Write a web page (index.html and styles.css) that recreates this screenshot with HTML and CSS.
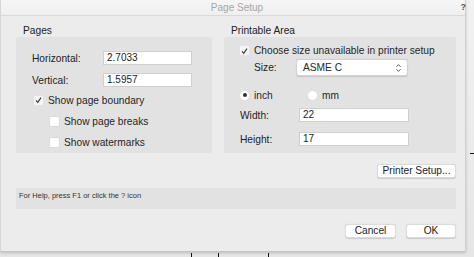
FILE: index.html
```html
<!DOCTYPE html>
<html>
<head>
<meta charset="utf-8">
<link rel="stylesheet" href="styles.css">
</head>
<body>
<div class="backdrop">
  <span class="tick tick-h"></span>
  <span class="tick tick-v t1"></span>
  <span class="tick tick-v t2"></span>
  <span class="tick tick-v t3"></span>
</div>
<div class="window">
  <div class="titlebar">
    <span class="title">Page Setup</span>
    <span class="help-icon">?</span>
  </div>
  <div class="content">
    <div class="groups">
      <div class="group pages">
        <div class="group-label">Pages</div>
        <div class="group-box">
          <div class="row field">
            <span class="lbl lbl-pages">Horizontal:</span>
            <span class="input in-pages">2.7033</span>
          </div>
          <div class="row field">
            <span class="lbl lbl-pages">Vertical:</span>
            <span class="input in-pages">1.5957</span>
          </div>
          <div class="row check first">
            <span class="cb checked"><svg viewBox="0 0 10 10" width="10" height="10"><path d="M2.2 5.4 L4.2 7.6 L7.8 2.4" fill="none" stroke="#333" stroke-width="1.2"/></svg></span>
            <span class="cb-text">Show page boundary</span>
          </div>
          <div class="row check indent">
            <span class="cb"></span>
            <span class="cb-text">Show page breaks</span>
          </div>
          <div class="row check indent">
            <span class="cb"></span>
            <span class="cb-text">Show watermarks</span>
          </div>
        </div>
      </div>
      <div class="group printable">
        <div class="group-label">Printable Area</div>
        <div class="group-box">
          <div class="row check top">
            <span class="cb checked"><svg viewBox="0 0 10 10" width="10" height="10"><path d="M2.2 5.4 L4.2 7.6 L7.8 2.4" fill="none" stroke="#333" stroke-width="1.2"/></svg></span>
            <span class="cb-text">Choose size unavailable in printer setup</span>
          </div>
          <div class="row size">
            <span class="lbl lbl-size">Size:</span>
            <span class="select">ASME C
              <svg class="updown" viewBox="0 0 8 12" width="7" height="10"><path d="M1.5 4.5 L4 2 L6.5 4.5 M1.5 7.5 L4 10 L6.5 7.5" fill="none" stroke="#444" stroke-width="1.1"/></svg>
            </span>
          </div>
          <div class="row radios">
            <span class="radio-item r-inch"><span class="radio on"></span><span class="rtext">inch</span></span>
            <span class="radio-item"><span class="radio"></span><span class="rtext">mm</span></span>
          </div>
          <div class="row dim">
            <span class="lbl lbl-dim">Width:</span>
            <span class="input in-dim">22</span>
          </div>
          <div class="row dim">
            <span class="lbl lbl-dim">Height:</span>
            <span class="input in-dim">17</span>
          </div>
        </div>
      </div>
    </div>
    <div class="printer-row">
      <span class="btn btn-printer">Printer Setup...</span>
    </div>
    <div class="helpbar">For Help, press F1 or click the ? icon</div>
    <div class="actions">
      <span class="btn btn-cancel">Cancel</span>
      <span class="btn btn-ok">OK</span>
    </div>
  </div>
</div>
</body>
</html>
```

FILE: styles.css
```css
html, body {
  margin: 0;
  padding: 0;
}
body {
  width: 474px;
  height: 257px;
  overflow: hidden;
  background: #e9e9e9;
  font-family: "Liberation Sans", Arial, sans-serif;
  font-size: 10.2px;
  color: #262626;
  position: relative;
}
.backdrop {
  position: absolute;
  left: 0;
  top: 0;
  width: 474px;
  height: 257px;
  background: linear-gradient(#f2f2f2, #e6e6e6);
}
.tick {
  position: absolute;
  background: #111;
}
.tick-h { left: 470px; top: 153px; width: 4px; height: 1px; }
.tick-v { top: 253px; width: 1px; height: 4px; }
.t1 { left: 191px; }
.t2 { left: 218px; }
.t3 { left: 268px; }
.window {
  position: relative;
  width: 466px;
  height: 252px;
  background: #ececec;
  box-sizing: border-box;
  border-left: 1px solid #d6d6d6;
  border-right: 1px solid #d0d0d0;
  border-bottom: 1px solid #c4c4c4;
  box-shadow: 0 1px 3px rgba(0,0,0,0.18);
}
.titlebar {
  height: 16px;
  box-sizing: border-box;
  border-bottom: 1px solid #d9d9d9;
  background: linear-gradient(#f6f6f6, #efefef);
  display: flex;
  justify-content: center;
  align-items: center;
  position: relative;
}
.title {
  color: #a6a6a6;
  font-size: 10px;
  line-height: 12px;
  margin-left: 8px;
}
.help-icon {
  position: absolute;
  right: -1px;
  top: 2px;
  font-size: 9px;
  font-weight: bold;
  color: #555;
  line-height: 10px;
}
.content {
  padding-left: 15px;
}
.groups {
  display: flex;
  gap: 12px;
}
.group-label {
  height: 21px;
  line-height: 12px;
  padding-top: 9px;
  box-sizing: border-box;
  padding-left: 7px;
  color: #222;
}
.group-box {
  background: #e2e2e2;
  height: 116px;
  box-sizing: border-box;
  border-radius: 2px;
}
.pages .group-box {
  width: 196px;
  padding-top: 14px;
  padding-left: 16px;
}
.printable .group-label { padding-left: 7px; }
.printable .group-box {
  width: 232px;
  padding-top: 7px;
  padding-left: 14px;
}
.row {
  display: flex;
  align-items: center;
}
.lbl { color: #222; }
.lbl-pages { width: 71px; }
.input {
  background: #fff;
  border: 1px solid #cfcfcf;
  box-sizing: border-box;
  height: 14px;
  line-height: 12px;
  padding-left: 3px;
  font-size: 10px;
  color: #222;
}
.in-pages { width: 89px; }
.field + .field { margin-top: 8px; }
.cb {
  width: 11px;
  height: 11px;
  background: #fff;
  border-radius: 2px;
  box-sizing: border-box;
  border: 1px solid #dadada;
  display: flex;
  align-items: center;
  justify-content: center;
  flex: none;
}
.cb.checked {
  background: #f4f4f4;
  border-color: #e4e4e4;
}
.cb-text { margin-left: 4px; }
.check { height: 20px; }
.pages .check.first { margin-top: 3px; margin-left: 1px; }
.pages .check.indent { margin-left: 17px; margin-top: 1px; }
.printable .check.top { height: 13px; margin-left: 1px; }
.size { margin-top: 2px; height: 17px; padding-left: 16px; }
.lbl-size { width: 42px; }
.select {
  width: 112px;
  height: 17px;
  box-sizing: border-box;
  background: #fff;
  border: 1px solid #d2d2d2;
  border-radius: 3px;
  padding-left: 6px;
  display: flex;
  align-items: center;
  justify-content: space-between;
  padding-right: 5px;
  box-shadow: 0 0.5px 1px rgba(0,0,0,0.12);
}
.updown { flex: none; }
.radios { margin-top: 13px; height: 12px; padding-left: 1px; }
.radio-item { display: flex; align-items: center; }
.r-inch { width: 68px; }
.radio {
  width: 11px;
  height: 11px;
  border-radius: 50%;
  background: #fff;
  box-sizing: border-box;
  border: 1px solid #dedede;
  display: flex;
  align-items: center;
  justify-content: center;
}
.radio.on::after {
  content: "";
  width: 4px;
  height: 4px;
  border-radius: 50%;
  background: #333;
}
.rtext { margin-left: 4px; }
.dim { padding-left: 2px; }
.lbl-dim { width: 59px; }
.in-dim { width: 110px; }
.radios + .dim { margin-top: 7px; }
.dim + .dim { margin-top: 10px; }
.printer-row {
  display: flex;
  justify-content: flex-end;
  width: 440px;
  margin-top: 11px;
}
.btn {
  height: 14px;
  box-sizing: border-box;
  background: #fff;
  border-radius: 3px;
  border: 1px solid #dcdcdc;
  box-shadow: 0 0.5px 1px rgba(0,0,0,0.15);
  display: flex;
  align-items: center;
  justify-content: center;
  color: #222;
  line-height: 12px;
}
.btn-printer { width: 79px; }
.helpbar {
  margin-top: 10px;
  width: 440px;
  height: 21px;
  background: #e2e2e2;
  box-sizing: border-box;
  padding-left: 3px;
  padding-top: 3px;
  font-size: 7.5px;
  line-height: 9px;
  color: #333;
}
.actions {
  display: flex;
  justify-content: flex-end;
  gap: 10px;
  width: 440px;
  margin-top: 15px;
}
.btn-cancel { width: 51px; }
.btn-ok { width: 50px; }
```
